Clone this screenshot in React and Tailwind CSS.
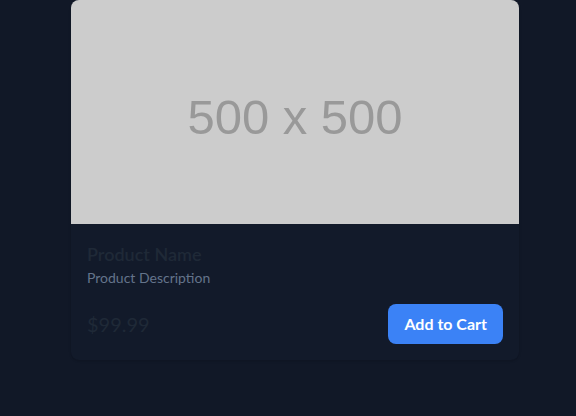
export default function App() {
  return (
    <div
      className="min-h-screen bg-[#111827] pl-[14px]"
      style={{ fontFamily: '"Segoe UI", Lato, "Noto Sans", sans-serif' }}
    >
      <div className="mx-auto w-[448px] overflow-hidden rounded-lg bg-[#121a2a] shadow-sm">
        <div className="flex h-56 items-center justify-center bg-[#cccccc] pt-[11px]">
          <span
            className="text-[49px] leading-none text-[#999999]"
            style={{ fontFamily: '"Liberation Sans", Arial, sans-serif' }}
          >
            500 x 500
          </span>
        </div>
        <div className="p-4">
          <h2 className="text-lg font-semibold text-[#1f2937]">Product Name</h2>
          <p className="text-sm text-[#64748b]">Product Description</p>
          <div className="mt-4 flex items-center justify-between">
            <span className="text-xl text-[#1f2937]">$99.99</span>
            <button className="rounded-lg bg-[#3b82f6] px-4 py-2 font-bold text-white">
              Add to Cart
            </button>
          </div>
        </div>
      </div>
    </div>
  );
}
